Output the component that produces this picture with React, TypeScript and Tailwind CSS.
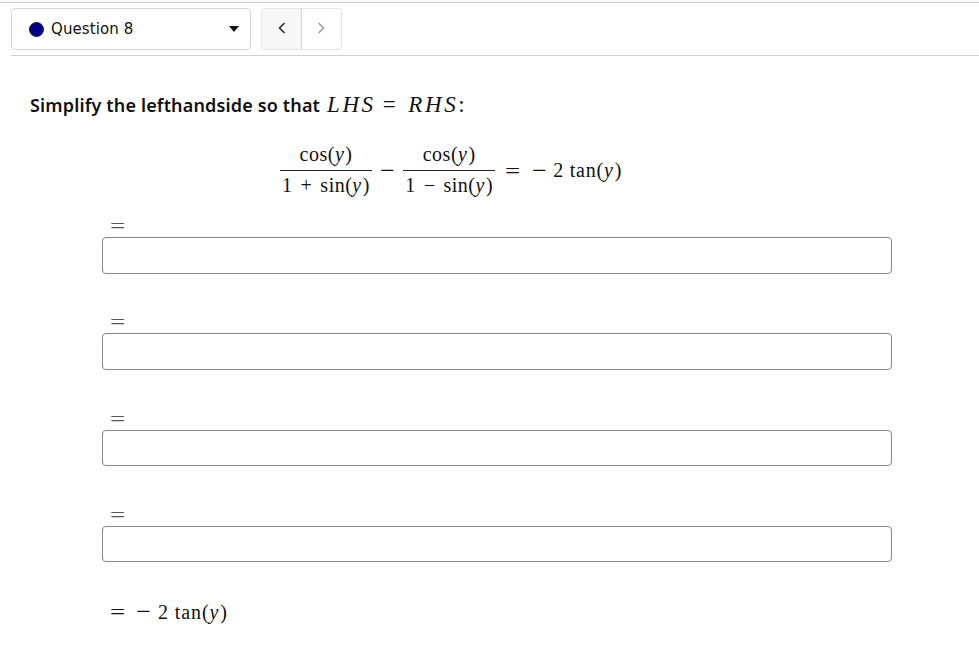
const serif = "font-['Liberation_Serif',serif]";

function Paren({ name }: { name: string }) {
  return (
    <span className="whitespace-nowrap">
      {name}(<i className="pr-[1px]">y</i>)
    </span>
  );
}

function Eq({ className = "" }: { className?: string }) {
  return <span className={`inline-block origin-left scale-x-[1.35] text-[20px] leading-none ${className}`}>=</span>;
}

function Minus({ className = "" }: { className?: string }) {
  return <span className={`text-[26px] leading-none ${className}`}>−</span>;
}

function Fraction({ sign }: { sign: string }) {
  return (
    <span className="flex w-[92px] flex-col items-center">
      <span className="flex h-[30px] items-center pb-[2px]">
        <Paren name="cos" />
      </span>
      <span className="h-px w-full bg-[#222]" />
      <span className="flex h-[30px] items-center whitespace-nowrap pb-[3px]">
        1<span className="mx-[8px]">{sign}</span>
        <Paren name="sin" />
      </span>
    </span>
  );
}

function AnswerRow({ height, gap }: { height: string; gap: string }) {
  return (
    <div className={`flex flex-col ${gap}`}>
      <div className={`${serif} h-[21px] pl-[8px] leading-[21px] text-[#555]`}>
        <Eq />
      </div>
      <div className={`${height} w-[790px] rounded-[4px] border border-[#858585] bg-white`} />
    </div>
  );
}

export default function App() {
  return (
    <div className="h-[665px] w-[979px] overflow-hidden bg-white font-['DejaVu_Sans',sans-serif] text-black">
      <div className="mt-[2px] border-t border-[#c9c9c9]" />
      <div className="ml-[11px] flex h-[53px] items-start gap-[10px] border-b border-[#cfcfcf] pt-[5px]">
        <div className="flex h-[42px] w-[240px] items-center rounded-[4px] border border-[#d5d5d5] pl-[17px] pr-[11px]">
          <span className="h-[15px] w-[15px] rounded-full border border-[#222] bg-[#00008b]" />
          <span className="ml-[7px] mt-[1px] flex-1 text-[15px] tracking-[0.1px] text-[#111]">Question 8</span>
          <span className="h-0 w-0 border-x-[5px] border-t-[6px] border-x-transparent border-t-[#111]" />
        </div>
        <div className="flex h-[42px] w-[81px] rounded-[4px] border border-[#e4e4e4]">
          <div className="flex w-[40px] items-center justify-center rounded-l-[4px] border-r border-[#d5d5d5] bg-[#f7f7f7]">
            <svg width="10" height="14" viewBox="0 0 10 14" fill="none" stroke="#222" strokeWidth="1.5" className="-mt-[2px]">
              <path d="M7.5 2 L2.5 7 L7.5 12" />
            </svg>
          </div>
          <div className="flex flex-1 items-center justify-center">
            <svg width="10" height="14" viewBox="0 0 10 14" fill="none" stroke="#999" strokeWidth="1.5" className="-mt-[2px] -ml-[2px]">
              <path d="M2.5 2 L7.5 7 L2.5 12" />
            </svg>
          </div>
        </div>
      </div>

      <div className="mt-[37px] flex h-[25px] items-center pl-[30px] text-[18px] text-[#111]">
        <span className="font-['Noto_Sans',sans-serif] font-semibold tracking-[0.15px]">Simplify the lefthandside so that</span>
        <span className={`${serif} ml-[7px] whitespace-nowrap text-[23px] font-normal tracking-[2.6px]`}>
          <i>LHS</i>
          <span className="ml-[7px] mr-[10px]">=</span>
          <i>RHS</i>:
        </span>
      </div>

      <div className={`${serif} mt-[22px] flex h-[61px] items-center pl-[280px] text-[20px] tracking-[0.5px] text-[#111]`}>
        <Fraction sign="+" />
        <Minus className="ml-[8px] mr-[8px]" />
        <Fraction sign="−" />
        <Eq className="ml-[10px]" />
        <Minus className="ml-[15px]" />
        <span className="-mt-[2px] ml-[6px] whitespace-nowrap tracking-[0.8px]">
          2 <Paren name="tan" />
        </span>
      </div>

      <div className="ml-[102px] mt-[15px] flex flex-col">
        <AnswerRow height="h-[37px]" gap="mb-[38px]" />
        <AnswerRow height="h-[37px]" gap="mb-[39px]" />
        <AnswerRow height="h-[36px]" gap="mb-[39px]" />
        <AnswerRow height="h-[36px]" gap="mb-0" />
      </div>

      <div className={`${serif} ml-[110px] mt-[38px] flex h-[24px] items-center text-[20px] text-[#111]`}>
        <Eq />
        <Minus className="ml-[15px]" />
        <span className="ml-[7px] whitespace-nowrap tracking-[0.9px]">
          2 <Paren name="tan" />
        </span>
      </div>
    </div>
  );
}
